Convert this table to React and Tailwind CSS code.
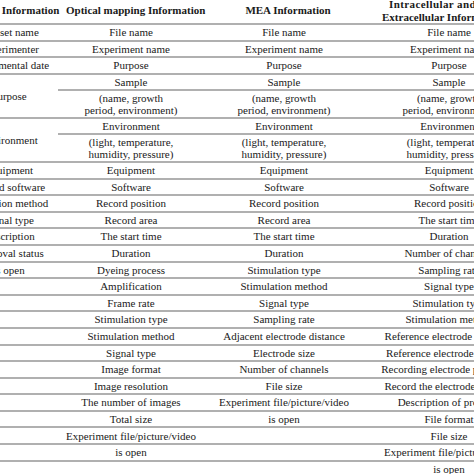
import React from 'react'

const cell = 'p-0 text-center align-middle border-b-2 border-[#b0b0b0] leading-[12.5px]'

const rows = [
  ['Dataset name', 'File name', 'File name', 'File name'],
  ['Experimenter', 'Experiment name', 'Experiment name', 'Experiment name'],
  ['Experimental date', 'Purpose', 'Purpose', 'Purpose'],
  { group: 'Purpose', top: 'Sample', bottom: ['(name, growth', 'period, environment)'] },
  { group: 'Environment', top: 'Environment', bottom: ['(light, temperature,', 'humidity, pressure)'] },
  ['Equipment', 'Equipment', 'Equipment', 'Equipment'],
  ['Record software', 'Software', 'Software', 'Software'],
  ['Detection method', 'Record position', 'Record position', 'Record position'],
  ['Signal type', 'Record area', 'Record area', 'The start time'],
  ['Description', 'The start time', 'The start time', 'Duration'],
  ['Approval status', 'Duration', 'Duration', 'Number of channels'],
  ['is open', 'Dyeing process', 'Stimulation type', 'Sampling rate'],
  ['', 'Amplification', 'Stimulation method', 'Signal type'],
  ['', 'Frame rate', 'Signal type', 'Stimulation type'],
  ['', 'Stimulation type', 'Sampling rate', 'Stimulation method'],
  ['', 'Stimulation method', 'Adjacent electrode distance', 'Reference electrode presence'],
  ['', 'Signal type', 'Electrode size', 'Reference electrode position'],
  ['', 'Image format', 'Number of channels', 'Recording electrode properties'],
  ['', 'Image resolution', 'File size', 'Record the electrode position'],
  ['', 'The number of images', 'Experiment file/picture/video', 'Description of protocol'],
  ['', 'Total size', 'is open', 'File format'],
  ['', 'Experiment file/picture/video', '', 'File size'],
  ['', 'is open', '', 'Experiment file/picture/video'],
  ['', '', '', 'is open'],
]

function GroupRows({ row }) {
  return (
    <>
      <tr className="h-[16.6px]">
        <td rowSpan={2} className={cell}>{row.group}</td>
        <td className={cell}>{row.top}</td>
        <td className={cell}>{row.top}</td>
        <td className={cell}>{row.top}</td>
      </tr>
      <tr className="h-[27.5px]">
        {[0, 1, 2].map((i) => (
          <td key={i} className={cell}>
            {row.bottom[0]}
            <br />
            {row.bottom[1]}
          </td>
        ))}
      </tr>
    </>
  )
}

export default function App() {
  return (
    <div className="h-[474px] w-[474px] overflow-hidden bg-white font-['Liberation_Serif',serif] text-[11px] text-[#1a1a1a]">
      <table className="-ml-[40px] -mt-[2px] w-[574px] table-fixed border-collapse">
        <colgroup>
          <col className="w-[98px]" />
          <col className="w-[146px]" />
          <col className="w-[160px]" />
          <col className="w-[170px]" />
        </colgroup>
        <thead>
          <tr className="h-[25px] font-bold whitespace-nowrap">
            <th className={`${cell} pl-[14px]`}>Basic Information</th>
            <th className={`${cell} pl-[8px]`}>Optical mapping Information</th>
            <th className={`${cell} pl-[8px]`}>MEA Information</th>
            <th className={`${cell} !text-left pl-[18px]`}>
              <span className="pl-[7px] tracking-[0.4px]">Intracellular and</span>
              <br />
              Extracellular Information
            </th>
          </tr>
        </thead>
        <tbody>
          {rows.map((row, i) =>
            Array.isArray(row) ? (
              <tr key={i} className="h-[16.6px]">
                {row.map((t, j) => (
                  <td key={j} className={cell}>{t}</td>
                ))}
              </tr>
            ) : (
              <GroupRows key={i} row={row} />
            )
          )}
        </tbody>
      </table>
    </div>
  )
}
